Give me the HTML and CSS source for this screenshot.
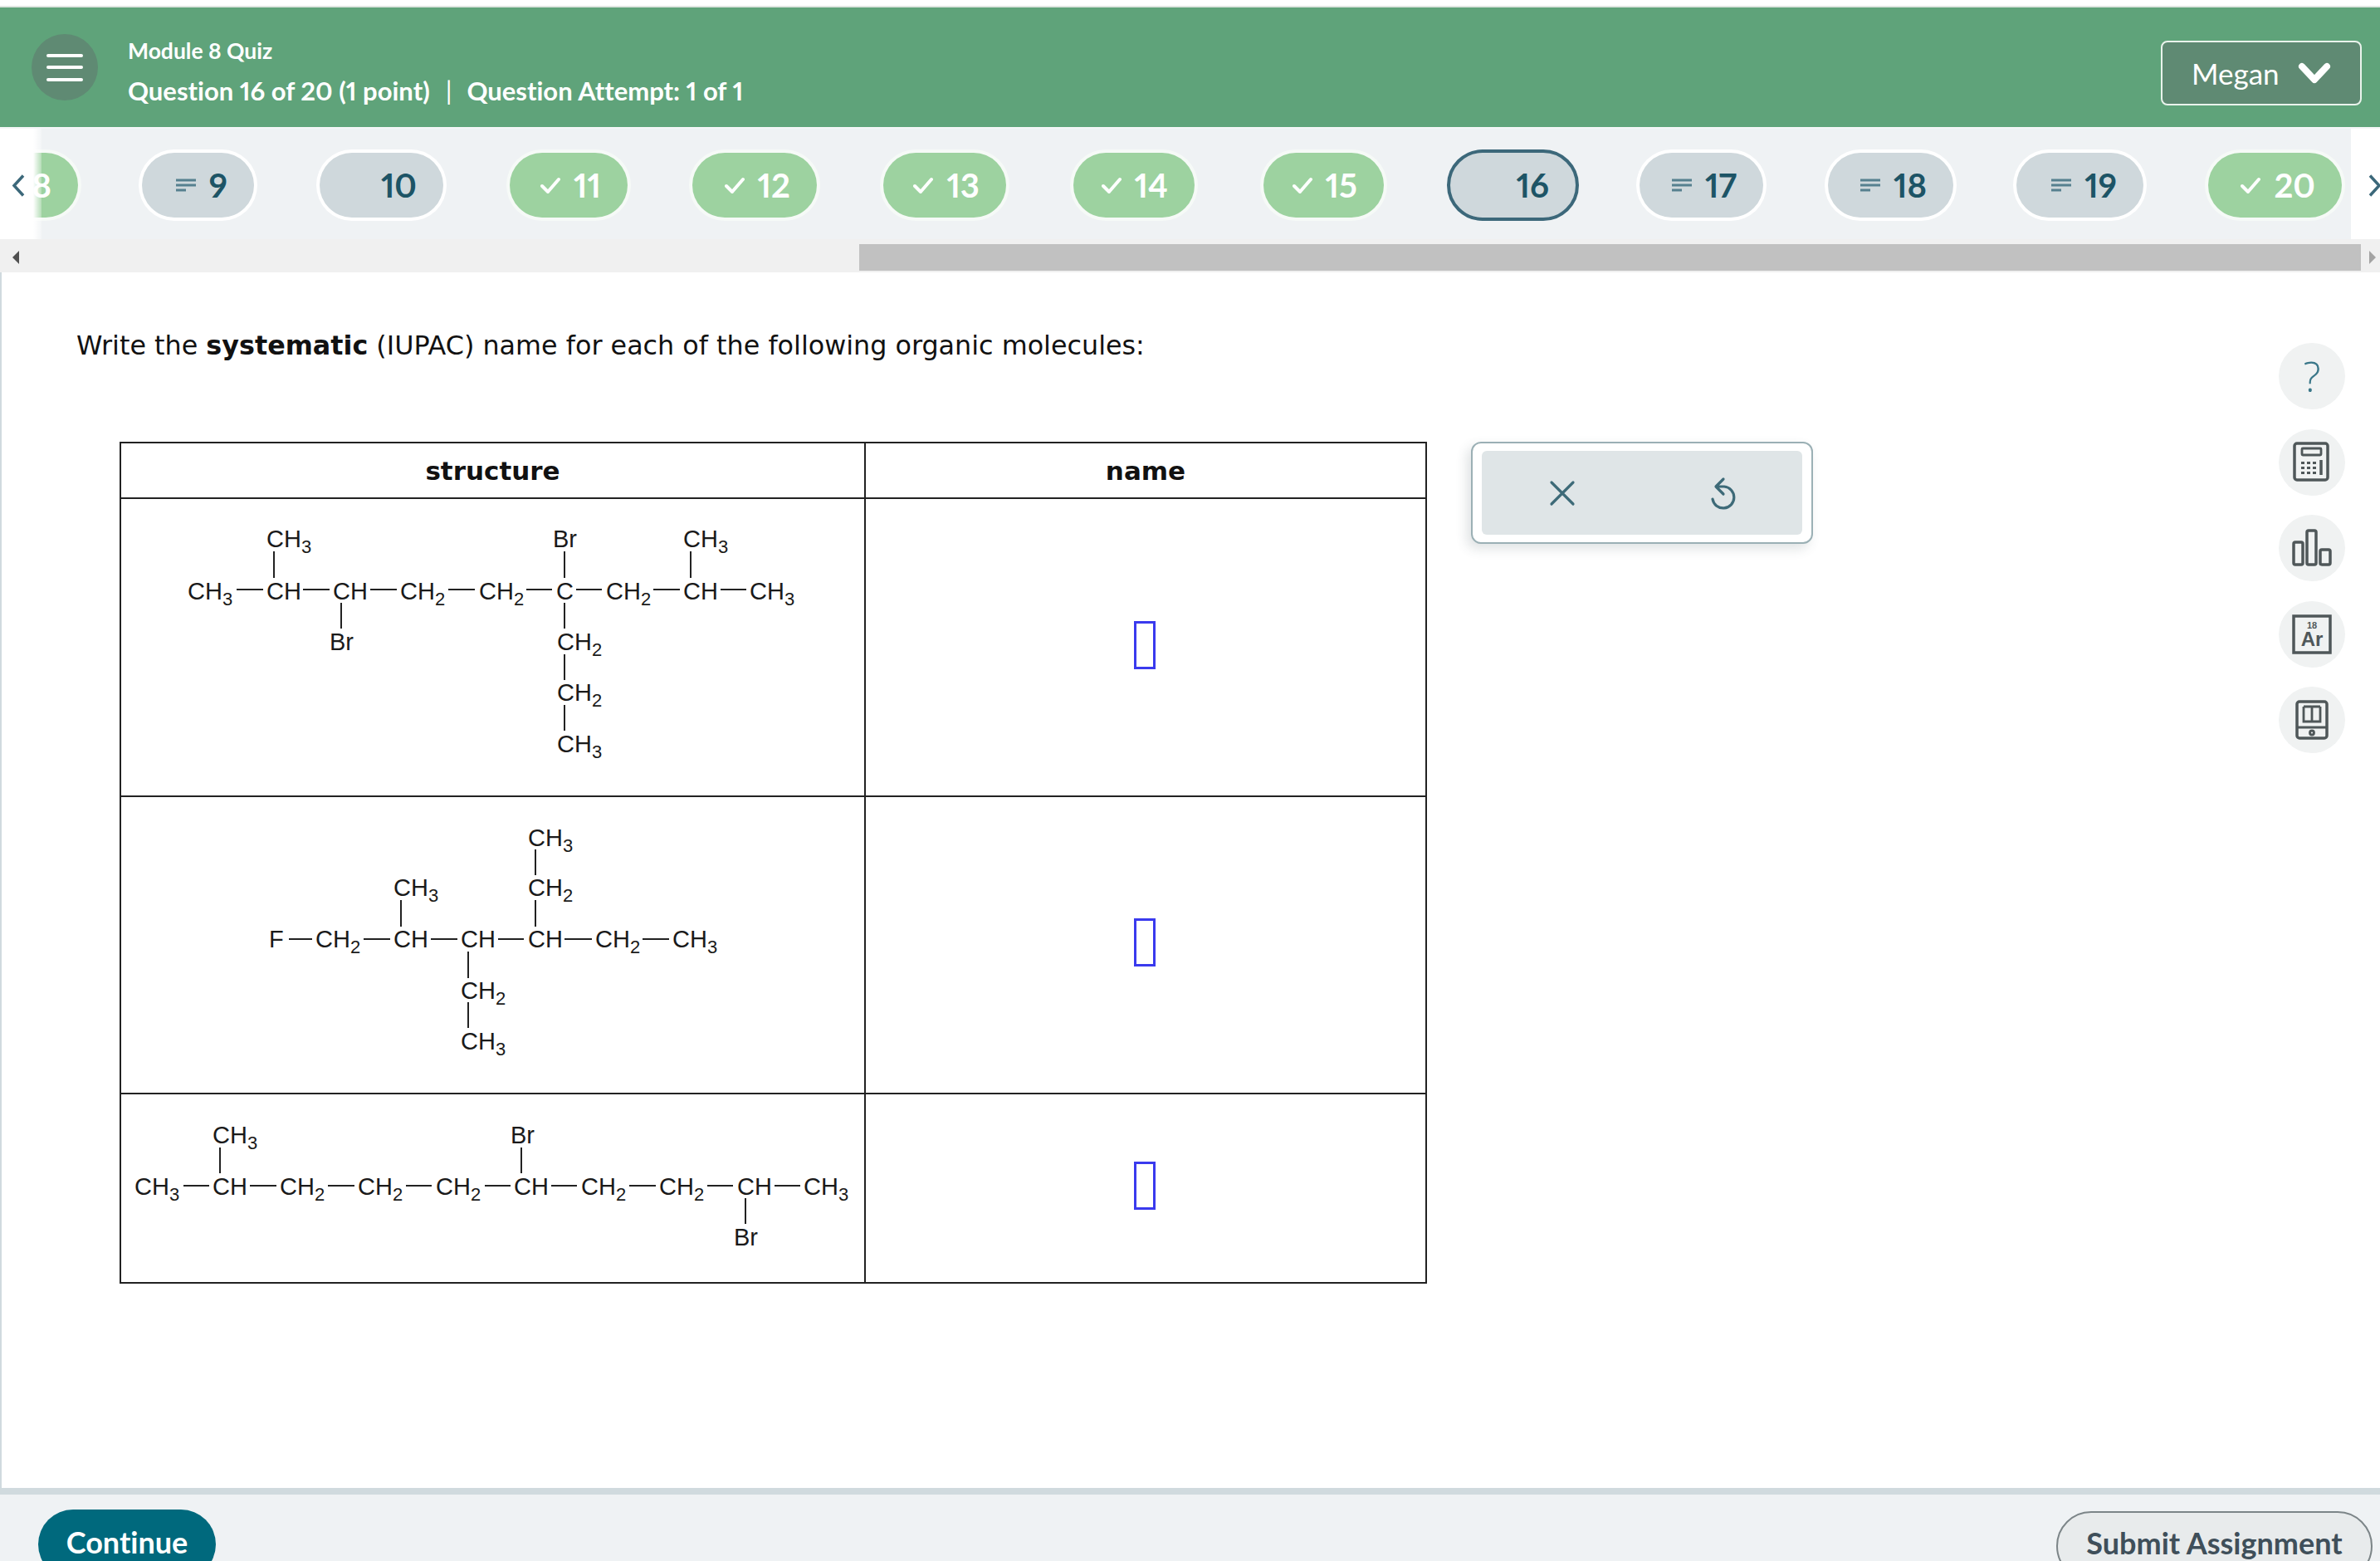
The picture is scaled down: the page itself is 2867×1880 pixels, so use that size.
FILE: index.html
```html
<!DOCTYPE html>
<html lang="en">
<head>
<meta charset="utf-8">
<title>Module 8 Quiz</title>
<link rel="stylesheet" href="styles.css">
</head>
<body>
<div class="page">
  <header class="topbar">
    <button class="menu" aria-label="Menu"><span></span><span></span><span></span></button>
    <div class="titles">
      <div class="module">Module 8 Quiz</div>
      <div class="question-info"><span>Question 16 of 20 (1 point)</span><i>|</i><span>Question Attempt: 1 of 1</span></div>
    </div>
    <button class="user"><span>Megan</span>
      <svg class="user-chev" viewBox="0 0 40 28"><path d="M5 6 20 22 35 6"/></svg>
    </button>
  </header>

  <nav class="strip">
    <div class="pills">
      <div class="q done q8"><svg class="ico" viewBox="0 0 24 24"><path d="M2 13l7 7L22 5"/></svg><b>8</b></div>
      <div class="q part q9"><svg class="ico" viewBox="0 0 24 24"><path d="M0 6H24M0 12H24M0 18H12"/></svg><b>9</b></div>
      <div class="q q10"><span class="ico"></span><b>10</b></div>
      <div class="q done q11"><svg class="ico" viewBox="0 0 24 24"><path d="M2 13l7 7L22 5"/></svg><b>11</b></div>
      <div class="q done q12"><svg class="ico" viewBox="0 0 24 24"><path d="M2 13l7 7L22 5"/></svg><b>12</b></div>
      <div class="q done q13"><svg class="ico" viewBox="0 0 24 24"><path d="M2 13l7 7L22 5"/></svg><b>13</b></div>
      <div class="q done q14"><svg class="ico" viewBox="0 0 24 24"><path d="M2 13l7 7L22 5"/></svg><b>14</b></div>
      <div class="q done q15"><svg class="ico" viewBox="0 0 24 24"><path d="M2 13l7 7L22 5"/></svg><b>15</b></div>
      <div class="q current q16"><span class="ico"></span><b>16</b></div>
      <div class="q part q17"><svg class="ico" viewBox="0 0 24 24"><path d="M0 6H24M0 12H24M0 18H12"/></svg><b>17</b></div>
      <div class="q part q18"><svg class="ico" viewBox="0 0 24 24"><path d="M0 6H24M0 12H24M0 18H12"/></svg><b>18</b></div>
      <div class="q part q19"><svg class="ico" viewBox="0 0 24 24"><path d="M0 6H24M0 12H24M0 18H12"/></svg><b>19</b></div>
      <div class="q done q20"><svg class="ico" viewBox="0 0 24 24"><path d="M2 13l7 7L22 5"/></svg><b>20</b></div>
    </div>
    <div class="cover cover-left"><svg viewBox="0 0 16 28"><path d="M14 2 3 14 14 26"/></svg></div>
    <div class="cover cover-right"><svg viewBox="0 0 16 28"><path d="M2 2 13 14 2 26"/></svg></div>
  </nav>

  <div class="scrollbar">
    <span class="arrow arrow-left"></span>
    <span class="thumb"></span>
    <span class="arrow arrow-right"></span>
  </div>

  <main class="main">
    <section class="content">
      <p class="prompt">Write the <strong>systematic</strong> (IUPAC) name for each of the following organic molecules:</p>
      <div class="work">
        <table class="grid">
          <thead>
            <tr><th class="col-structure">structure</th><th class="col-name">name</th></tr>
          </thead>
          <tbody>
            <tr>
              <td class="mol-cell">
                <svg class="mol mol1" viewBox="146 600 895 357">
                  <path class="bonds" d="M285 709H317M365 709H397M446 709H478M540 709H572M634 709H665M694 709H725M787 709H819M868 709H899M330 663V695M411 725V756M680 663V695M680 725V756M680 787V818M680 848V879M832 663V695"/>
                  <text x="226" y="721">CH<tspan class="sub" dy="7">3</tspan></text>
                  <text x="321" y="721">CH</text>
                  <text x="401" y="721">CH</text>
                  <text x="482" y="721">CH<tspan class="sub" dy="7">2</tspan></text>
                  <text x="577" y="721">CH<tspan class="sub" dy="7">2</tspan></text>
                  <text x="670" y="721">C</text>
                  <text x="730" y="721">CH<tspan class="sub" dy="7">2</tspan></text>
                  <text x="823" y="721">CH</text>
                  <text x="903" y="721">CH<tspan class="sub" dy="7">3</tspan></text>
                  <text x="321" y="658">CH<tspan class="sub" dy="7">3</tspan></text>
                  <text x="666" y="658">Br</text>
                  <text x="823" y="658">CH<tspan class="sub" dy="7">3</tspan></text>
                  <text x="397" y="782">Br</text>
                  <text x="671" y="782">CH<tspan class="sub" dy="7">2</tspan></text>
                  <text x="671" y="843">CH<tspan class="sub" dy="7">2</tspan></text>
                  <text x="671" y="905">CH<tspan class="sub" dy="7">3</tspan></text>
                </svg>
              </td>
              <td class="name-cell"><span class="answer"></span></td>
            </tr>
            <tr>
              <td class="mol-cell">
                <svg class="mol mol2" viewBox="146 959 895 356">
                  <path class="bonds" d="M348 1130H376M438 1130H470M519 1130H551M600 1130H631M680 1130H713M774 1130H806M483 1083V1115M645 1022V1053M645 1083V1115M564 1145V1177M564 1206V1237"/>
                  <text x="324" y="1140">F</text>
                  <text x="380" y="1140">CH<tspan class="sub" dy="7">2</tspan></text>
                  <text x="474" y="1140">CH</text>
                  <text x="555" y="1140">CH</text>
                  <text x="636" y="1140">CH</text>
                  <text x="717" y="1140">CH<tspan class="sub" dy="7">2</tspan></text>
                  <text x="810" y="1140">CH<tspan class="sub" dy="7">3</tspan></text>
                  <text x="474" y="1078">CH<tspan class="sub" dy="7">3</tspan></text>
                  <text x="636" y="1078">CH<tspan class="sub" dy="7">2</tspan></text>
                  <text x="636" y="1018">CH<tspan class="sub" dy="7">3</tspan></text>
                  <text x="555" y="1202">CH<tspan class="sub" dy="7">2</tspan></text>
                  <text x="555" y="1263">CH<tspan class="sub" dy="7">3</tspan></text>
                </svg>
              </td>
              <td class="name-cell"><span class="answer"></span></td>
            </tr>
            <tr>
              <td class="mol-cell">
                <svg class="mol mol3" viewBox="146 1317 895 226">
                  <path class="bonds" d="M221 1427H252M301 1427H333M395 1427H427M489 1427H520M584 1427H615M664 1427H695M758 1427H790M852 1427H883M933 1427H964M265 1381V1412M628 1381V1412M898 1442V1473"/>
                  <text x="162" y="1438">CH<tspan class="sub" dy="7">3</tspan></text>
                  <text x="256" y="1438">CH</text>
                  <text x="337" y="1438">CH<tspan class="sub" dy="7">2</tspan></text>
                  <text x="431" y="1438">CH<tspan class="sub" dy="7">2</tspan></text>
                  <text x="525" y="1438">CH<tspan class="sub" dy="7">2</tspan></text>
                  <text x="619" y="1438">CH</text>
                  <text x="700" y="1438">CH<tspan class="sub" dy="7">2</tspan></text>
                  <text x="794" y="1438">CH<tspan class="sub" dy="7">2</tspan></text>
                  <text x="888" y="1438">CH</text>
                  <text x="968" y="1438">CH<tspan class="sub" dy="7">3</tspan></text>
                  <text x="256" y="1376">CH<tspan class="sub" dy="7">3</tspan></text>
                  <text x="615" y="1376">Br</text>
                  <text x="884" y="1499">Br</text>
                </svg>
              </td>
              <td class="name-cell"><span class="answer"></span></td>
            </tr>
          </tbody>
        </table>
        <div class="palette">
          <div class="palette-inner">
            <svg class="pal-ico" viewBox="0 0 44 44"><path d="M9 9 35 35M35 9 9 35"/></svg>
            <svg class="pal-ico undo" viewBox="0 0 44 44"><path d="M23 3 14 12 23 21M15 12H24A13 13 0 1 1 10 27"/></svg>
          </div>
        </div>
      </div>
    </section>
    <aside class="tools">
      <div class="tool tool-help">?</div>
      <div class="tool">
        <svg viewBox="0 0 80 80">
          <rect class="ln" x="19" y="17" width="40" height="44" rx="3"/>
          <rect class="ln thin" x="28" y="23" width="23" height="8" rx="1"/>
          <path class="keys" d="M27 39h4v3h-4zM34 39h4v3h-4zM41 39h4v3h-4zM27 45h4v3h-4zM34 45h4v3h-4zM41 45h4v3h-4zM27 51h4v3h-4zM34 51h4v3h-4zM41 51h4v3h-4z"/>
          <path class="ln" d="M51 37V55"/>
        </svg>
      </div>
      <div class="tool">
        <svg viewBox="0 0 80 80">
          <rect class="ln" x="18" y="33" width="11" height="27" rx="2"/>
          <rect class="ln" x="34" y="19" width="11" height="41" rx="2"/>
          <rect class="ln" x="50" y="42" width="12" height="18" rx="2"/>
        </svg>
      </div>
      <div class="tool">
        <svg viewBox="0 0 80 80">
          <rect class="ln" x="18" y="18" width="44" height="44"/>
          <text class="atom-no" x="40" y="33">18</text>
          <text class="atom" x="40" y="54">Ar</text>
        </svg>
      </div>
      <div class="tool">
        <svg viewBox="0 0 80 80">
          <rect class="ln" x="22" y="18" width="36" height="44" rx="3"/>
          <path class="ln thin" d="M22 49H58M30 24H39C39.500 24 40 24.500 40 25V43M50 24H41C40.500 24 40 24.500 40 25M30 24V42H50V24"/>
          <circle class="ln thin" cx="40" cy="55.500" r="2.500"/>
        </svg>
      </div>
    </aside>
  </main>

  <footer class="footer">
    <button class="btn btn-continue">Continue</button>
    <button class="btn btn-submit">Submit Assignment</button>
  </footer>
</div>
</body>
</html>
```

FILE: styles.css
```css
* { box-sizing: border-box; }
html, body { margin: 0; padding: 0; background: #fff; }
body { width: 2867px; height: 1880px; overflow: hidden; font-family: Lato, "Open Sans", sans-serif; font-variant-ligatures: none; font-variant-numeric: proportional-nums; }
button { font: inherit; font-variant-ligatures: none; cursor: pointer; }

.page { width: 2867px; height: 1880px; display: flex; flex-direction: column; padding-top: 7px; overflow: hidden; }

/* top bar */
.topbar { flex: none; height: 146px; border-top: 2px solid #dfe6e1; background: #5fa37a; display: flex; align-items: center; padding: 0 22px 0 38px; color: #fff; }
.menu { width: 80px; height: 80px; border: 0; border-radius: 50%; background: #5f8a73; display: flex; flex-direction: column; align-items: center; justify-content: center; gap: 10.500px; padding: 0; margin-right: 36px; }
.menu span { display: block; width: 44px; height: 4px; border-radius: 2px; background: #fff; }
.titles { flex: 1; display: flex; flex-direction: column; gap: 15px; margin-top: 10px; }
.module { font-size: 26.500px; font-weight: 700; line-height: 30px; }
.question-info { font-size: 31px; font-weight: 700; line-height: 36px; display: flex; }
.question-info i { font-style: normal; font-weight: 400; margin: 0 18px 0 19px; }
.user { width: 242px; height: 78px; margin-top: 14px; border: 2px solid #eaf3ec; border-radius: 8px; background: #5f8a73; color: #fff; display: flex; align-items: center; padding: 0 0 0 35px; font-size: 35px; gap: 22px; }
.user-chev { width: 40px; height: 28px; fill: none; stroke: #fff; stroke-width: 8; stroke-linecap: round; stroke-linejoin: round; }

/* question strip */
.strip { flex: none; position: relative; height: 135px; margin-top: 0; background: #eff2f4; overflow: hidden; border-top: 2px solid #f4f6f7; }
.pills { display: flex; align-items: center; height: 136px; }
.q { flex: none; height: 78px; border-radius: 39px; display: flex; align-items: center; justify-content: flex-end; padding-right: 32px; gap: 16px; background: #cfd8dc; box-shadow: 0 0 0 4px #fff; color: #1d5466; }
.q b { font-size: 40px; font-weight: 700; line-height: 1; }
.ico { width: 24px; height: 24px; flex: none; fill: none; stroke: #56808f; stroke-width: 2.800; }
.q.done { background: #9dd2a0; color: #fff; box-shadow: 0 0 0 4px #f6faf7; }
.q.done .ico { stroke: #fff; stroke-width: 4; stroke-linecap: round; stroke-linejoin: round; }
.q.current { height: 86px; border-radius: 43px; border: 4px solid #3c687a; box-shadow: none; padding-right: 32px; }
.q8 { width: 144px; margin-left: -50px; }
.q9 { width: 135px; margin-left: 77px; }
.q10 { width: 149px; margin-left: 79px; }
.q11 { width: 142px; margin-left: 80px; }
.q12 { width: 150px; margin-left: 78px; }
.q13 { width: 148px; margin-left: 80px; }
.q14 { width: 146px; margin-left: 81px; }
.q15 { width: 145px; margin-left: 83px; }
.q16 { width: 159px; margin-left: 76px; }
.q17 { width: 149px; margin-left: 73px; }
.q18 { width: 151px; margin-left: 78px; }
.q19 { width: 153px; margin-left: 76px; }
.q20 { width: 161px; margin-left: 78px; }
.cover { position: absolute; top: 0; bottom: 0; display: flex; align-items: center; padding-top: 3px; }
.cover svg { width: 16px; height: 29px; fill: none; stroke: #3c687a; stroke-width: 3.500; flex: none; }
.cover-left { left: 0; width: 50px; padding-left: 14px; background: linear-gradient(90deg, #fff 80%, rgba(255,255,255,.25) 100%); }
.cover-right { right: 0; width: 35px; padding-left: 21px; background: #fff; }

/* horizontal scrollbar */
.scrollbar { flex: none; height: 40px; background: #f0f0f0; display: flex; align-items: flex-start; position: relative; padding: 6px 0 0 1035px; }
.thumb { display: block; width: 1809px; height: 32px; background: #c1c1c1; }
.arrow { position: absolute; top: 14px; width: 0; height: 0; border-top: 8px solid transparent; border-bottom: 8px solid transparent; }
.arrow-left { left: 15px; border-right: 8px solid #505050; }
.arrow-right { right: 5px; border-left: 8px solid #a3a3a3; }

/* main */
.main { flex: none; height: 1464px; border-left: 2px solid #d0dade; display: flex; background: #fff; }
.content { flex: 1; padding: 68px 0 0 90px; }
.prompt { margin: 0; font-family: "DejaVu Sans", sans-serif; font-size: 31.800px; line-height: 40px; color: #111; }
.prompt strong { font-weight: 700; }
.work { display: flex; align-items: flex-start; margin: 96px 0 0 52px; }
.grid { flex: none; width: 1573px; border-collapse: collapse; table-layout: fixed; font-family: "DejaVu Sans", sans-serif; color: #111; }
.grid th, .grid td { border: 2px solid #222; padding: 0; }
.grid th { height: 67px; font-size: 31px; font-weight: 700; text-align: center; }
.col-structure { width: 897px; }
.col-name { width: 676px; }
.grid .name-cell { text-align: center; vertical-align: middle; padding-right: 2px; }
.mol { display: block; width: 895px; }
.mol1 { height: 357px; }
.mol2 { height: 356px; }
.mol3 { height: 226px; }
.mol text { font-family: "Liberation Sans", Arial, sans-serif; font-size: 29px; fill: #1a1a1a; }
.mol .sub { font-size: 22px; }
.bonds { fill: none; stroke: #222; stroke-width: 2; }
.answer { display: block; width: 26px; height: 58px; margin: 0 auto 6px; border: 3px solid #3a3aee; }

.palette { flex: none; width: 412px; height: 123px; margin-left: 53px; padding: 9px 11px; border: 2px solid #9bb0b5; border-radius: 12px; background: #fff; box-shadow: -5px 6px 14px rgba(60, 80, 90, .16); }
.palette-inner { height: 100%; border-radius: 6px; background: #dfe5e7; display: flex; align-items: center; justify-content: space-around; }
.pal-ico { width: 44px; height: 44px; fill: none; stroke: #3d6a78; stroke-width: 3.200; stroke-linecap: round; stroke-linejoin: round; }
.undo { position: relative; top: 2px; }

/* tool buttons */
.tools { flex: none; width: 122px; padding-top: 85px; display: flex; flex-direction: column; gap: 23.500px; }
.tool { width: 80px; height: 80px; border-radius: 50%; background: #f0f2f2; }
.tool svg { display: block; width: 80px; height: 80px; }
.tool-help { font-family: "Open Sans", sans-serif; font-weight: 300; font-size: 50px; line-height: 80px; text-align: center; color: #3a7789; }
.ln { fill: none; stroke: #4f5759; stroke-width: 3.500; }
.ln.thin { stroke-width: 2.800; }
.keys { fill: #4f5759; }
.atom-no, .atom { font-family: "Liberation Sans", Arial, sans-serif; text-anchor: middle; fill: #4f5759; font-weight: 700; }
.atom-no { font-size: 11px; }
.atom { font-size: 24px; }

/* footer */
.footer { flex: none; height: 88px; border-top: 8px solid #d0dade; background: #eff2f4; display: flex; justify-content: space-between; align-items: flex-start; padding: 18px 9px 0 46px; overflow: hidden; }
.btn { height: 84px; border-radius: 42px; font-size: 36px; font-weight: 700; }
.btn-continue { width: 214px; border: 0; background: #00697d; color: #fff; padding: 0 0 6px; }
.btn-submit { width: 381px; margin-top: 2px; border: 2px solid #7c8588; background: #e8ebec; color: #3f4f5a; padding: 0 0 8px; }
```
